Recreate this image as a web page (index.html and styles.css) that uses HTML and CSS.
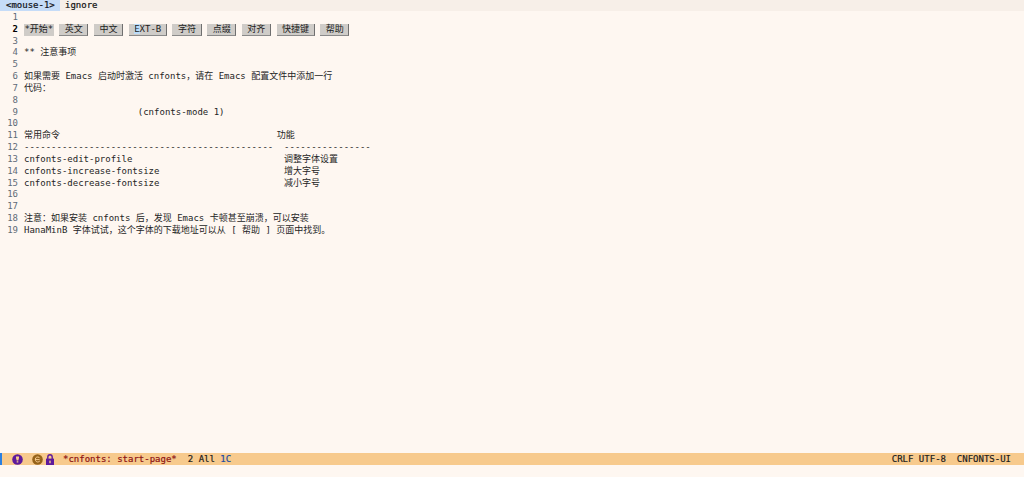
FILE: index.html
```html
<!DOCTYPE html>
<html lang="zh">
<head>
<meta charset="utf-8">
<title>cnfonts</title>
<link rel="stylesheet" href="styles.css">
</head>
<body>
<div class="frame">
  <header class="headerline"><span class="key">&lt;mouse-1&gt;</span><span class="cmd">ignore</span></header>
  <main class="buffer">
    <div class="line"><span class="num">1</span><span class="txt"></span></div>
    <div class="line current"><span class="num">2</span><span class="txt tabs"><span class="tab first">*开始*</span><span class="tab">英文</span><span class="tab">中文</span><span class="tab"><span class="cursor">E</span>XT-B</span><span class="tab">字符</span><span class="tab">点缀</span><span class="tab">对齐</span><span class="tab">快捷键</span><span class="tab">帮助</span></span></div>
    <div class="line"><span class="num">3</span><span class="txt"></span></div>
    <div class="line"><span class="num">4</span><span class="txt">** 注意事项</span></div>
    <div class="line"><span class="num">5</span><span class="txt"></span></div>
    <div class="line"><span class="num">6</span><span class="txt">如果需要 Emacs 启动时激活 cnfonts，请在 Emacs 配置文件中添加一行</span></div>
    <div class="line"><span class="num">7</span><span class="txt">代码：</span></div>
    <div class="line"><span class="num">8</span><span class="txt"></span></div>
    <div class="line"><span class="num">9</span><span class="txt">                     (cnfonts-mode 1)</span></div>
    <div class="line"><span class="num">10</span><span class="txt"></span></div>
    <div class="line"><span class="num">11</span><span class="txt">常用命令                                        功能</span></div>
    <div class="line"><span class="num">12</span><span class="txt">----------------------------------------------  ----------------</span></div>
    <div class="line"><span class="num">13</span><span class="txt">cnfonts-edit-profile                            调整字体设置</span></div>
    <div class="line"><span class="num">14</span><span class="txt">cnfonts-increase-fontsize                       增大字号</span></div>
    <div class="line"><span class="num">15</span><span class="txt">cnfonts-decrease-fontsize                       减小字号</span></div>
    <div class="line"><span class="num">16</span><span class="txt"></span></div>
    <div class="line"><span class="num">17</span><span class="txt"></span></div>
    <div class="line"><span class="num">18</span><span class="txt">注意：如果安装 cnfonts 后，发现 Emacs 卡顿甚至崩溃，可以安装</span></div>
    <div class="line"><span class="num">19</span><span class="txt">HanaMinB 字体试试，这个字体的下载地址可以从 [ 帮助 ] 页面中找到。</span></div>
  </main>
  <footer class="modeline">
    <span class="bar"></span>
    <svg class="ic ic-state" viewBox="0 0 11 11"><circle cx="5.5" cy="5.5" r="5.3" fill="#5d1a9c"/><path d="M4 2.6h3v1.4L6.3 6.6H4.7L4 4z M4.7 7.2h1.6v1.4H4.7z" fill="#f7ca8d"/></svg>
    <svg class="ic ic-coding" viewBox="0 0 11 11"><circle cx="5.5" cy="5.5" r="5.3" fill="#96631a"/><path d="M3 5.6h4.6M7.8 4.2C7 2.7 4.8 2.6 3.8 3.8 2.7 5.2 3.5 8 5.6 8c1 0 1.7-.4 2.2-1" fill="none" stroke="#f7ca8d" stroke-width="1"/></svg>
    <svg class="ic ic-lock" viewBox="0 0 10 11"><path d="M1 4.6h8V11H1z" fill="#5d1a9c"/><path d="M2.8 5V3a2.2 2.2 0 0 1 4.4 0V5" fill="none" stroke="#5d1a9c" stroke-width="1.4"/><rect x="4.3" y="6.6" width="1.4" height="2.6" fill="#f7ca8d"/></svg>
    <span class="bufname">*cnfonts: start-page*</span>
    <span class="pos">2 All <b class="col">1C</b></span>
    <span class="right">CRLF UTF-8  CNFONTS-UI</span>
  </footer>
  <div class="echo"></div>
</div>
</body>
</html>
```
FILE: styles.css
```css
html, body {
  margin: 0;
  padding: 0;
  height: 100%;
  background: #fef7f1;
}
.frame {
  height: 477px;
  width: 1024px;
  overflow: hidden;
  display: flex;
  flex-direction: column;
  font: 9px/12px "DejaVu Sans Mono", "Noto Sans CJK SC", monospace;
  color: #242424;
}
.headerline {
  height: 11px;
  line-height: 11px;
  flex: none;
  display: flex;
  background: #f7efe8;
  color: #111;
  -webkit-text-stroke: 0.2px #111;
}
.key {
  width: 54px;
  padding-left: 6px;
  background: #c5dcf8;
  color: #112;
}
.cmd {
  margin-left: 5px;
}
.buffer {
  flex: 1;
  padding-top: 1px;
}
.line {
  display: flex;
  height: 11.83px;
  line-height: 11.83px;
}
.num {
  width: 18px;
  text-align: right;
  color: #5f6b78;
  flex: none;
}
.txt {
  margin-left: 6px;
  display: block;
  white-space: pre;
}
.current .num {
  color: #000;
  font-weight: bold;
}
.tabs {
  display: flex;
  gap: 5.6px;
}
.tab {
  background: #cfccc8;
  padding: 0 4.6px 0 5.5px;
  border-right: 1px solid #6f6f6f;
  border-bottom: 1px solid #8a8a8a;
  height: 11px;
  line-height: 11px;
  color: #1c1c1c;
}
.first {
  padding: 0 0.4px;
  border: 0;
  height: 12px;
}
.cursor {
  background: #bcdcf8;
}
.modeline {
  flex: none;
  height: 12px;
  line-height: 12px;
  background: #f7ca8d;
  display: flex;
  align-items: center;
  color: #1c1c1c;
  -webkit-text-stroke: 0.2px currentColor;
}
.bar {
  width: 2px;
  height: 12px;
  background: #2a7fe0;
}
.ic {
  flex: none;
  width: 11px;
  height: 11px;
}
.ic-state { margin-left: 10px; }
.ic-coding { margin-left: 9px; }
.ic-lock { margin-left: 2px; width: 10px; }
.bufname {
  margin-left: 8px;
  color: #8f1414;
  white-space: pre;
}
.pos {
  margin-left: 11px;
  white-space: pre;
}
.col {
  color: #1a4aa0;
  font-weight: normal;
}
.right {
  margin-left: auto;
  margin-right: 13px;
  white-space: pre;
}
.echo {
  flex: none;
  height: 12px;
}
```
